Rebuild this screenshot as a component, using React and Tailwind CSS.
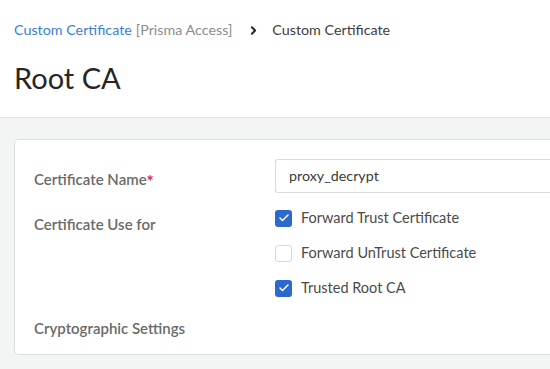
import { Check, ChevronRight } from 'lucide-react'

function Checkbox({ checked, label }) {
    return (
        <label className="flex items-center h-[18px] gap-[9px]">
            {checked ? (
                <span className="w-[17px] h-[17px] rounded-[3px] bg-[#2c69cc] flex items-center justify-center">
                    <Check size={12} strokeWidth={3} className="text-white" />
                </span>
            ) : (
                <span className="w-[17px] h-[17px] rounded-[3px] border border-[#d4d6d8] bg-white" />
            )}
            <span className="text-[14.5px] text-[#4a4a4a]">{label}</span>
        </label>
    )
}

export default function App() {
    return (
        <div className="w-[550px] h-[369px] overflow-hidden bg-[#f3f4f4] font-['Lato',sans-serif]">
            {/* Header */}
            <div className="bg-white border-b border-[#e1e3e4] h-[118px] pl-[14px] pt-[21px]">
                <div className="flex items-center text-[14.3px] h-[18px]">
                    <span className="text-[#3b7dd8]">Custom Certificate</span>
                    <span className="text-[#8c8c8c] ml-[4px]">[Prisma Access]</span>
                    <ChevronRight size={13} strokeWidth={3.5} className="text-[#222] ml-[15px]" />
                    <span className="text-[#3d3d3d] ml-[12px]">Custom Certificate</span>
                </div>
                <h1 className="text-[29px] text-[#262626] mt-[24px] leading-none">Root CA</h1>
            </div>

            {/* Card */}
            <div className="pl-[14px] pt-[21px]">
                <div className="bg-white border border-[#dcdfe0] border-r-0 rounded-l-[5px] h-[216px] pl-[19px] pt-[19px]">
                    <div className="flex">
                        <div className="w-[241px] pt-[9px] text-[15px] text-[#6a6a6a] font-semibold">
                            Certificate Name
                            <span className="relative top-[3px] text-[#d32f2f] font-bold text-[17px] leading-none">*</span>
                        </div>
                        <div className="flex-1 h-[34px] border border-[#d9dbdc] border-r-0 rounded-l-[3px] pl-[13px] flex items-center text-[14.3px] text-[#3a3a3a]">
                            proxy_decrypt
                        </div>
                    </div>
                    <div className="flex mt-[16px]">
                        <div className="w-[241px] pt-[4px] text-[15px] text-[#6a6a6a] font-semibold">Certificate Use for</div>
                        <div className="flex flex-col gap-[17px]">
                            <Checkbox checked label="Forward Trust Certificate" />
                            <Checkbox label="Forward UnTrust Certificate" />
                            <Checkbox checked label="Trusted Root CA" />
                        </div>
                    </div>
                    <div className="mt-[20px] text-[15px] text-[#6a6a6a] font-semibold">Cryptographic Settings</div>
                </div>
            </div>
        </div>
    )
}
